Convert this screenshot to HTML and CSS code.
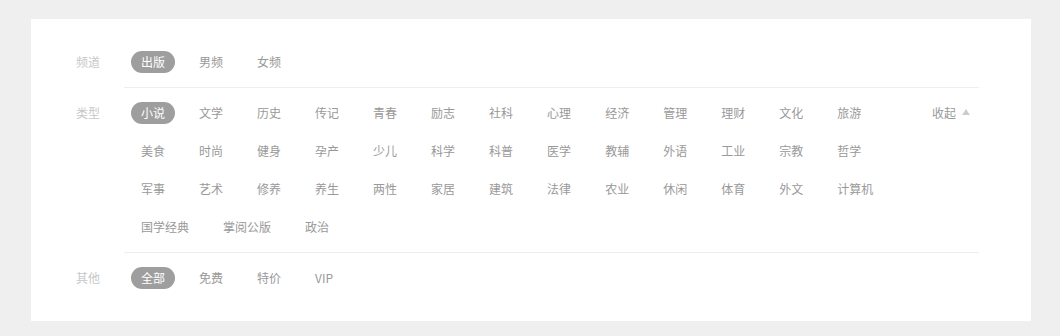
FILE: index.html
```html
<!DOCTYPE html>
<html lang="zh">
<head>
<meta charset="utf-8">
<title>筛选</title>
<link rel="stylesheet" href="styles.css">
</head>
<body>
<div class="card">
  <div class="section">
    <div class="label">频道</div>
    <div class="content">
      <div class="tags">
        <span class="tag active">出版</span>
        <span class="tag">男频</span>
        <span class="tag">女频</span>
      </div>
    </div>
  </div>
  <div class="section">
    <div class="label">类型</div>
    <div class="content">
      <div class="tags wrap">
        <span class="tag active">小说</span>
        <span class="tag">文学</span>
        <span class="tag">历史</span>
        <span class="tag">传记</span>
        <span class="tag">青春</span>
        <span class="tag">励志</span>
        <span class="tag">社科</span>
        <span class="tag">心理</span>
        <span class="tag">经济</span>
        <span class="tag">管理</span>
        <span class="tag">理财</span>
        <span class="tag">文化</span>
        <span class="tag">旅游</span>
        <span class="tag">美食</span>
        <span class="tag">时尚</span>
        <span class="tag">健身</span>
        <span class="tag">孕产</span>
        <span class="tag">少儿</span>
        <span class="tag">科学</span>
        <span class="tag">科普</span>
        <span class="tag">医学</span>
        <span class="tag">教辅</span>
        <span class="tag">外语</span>
        <span class="tag">工业</span>
        <span class="tag">宗教</span>
        <span class="tag">哲学</span>
        <span class="tag">军事</span>
        <span class="tag">艺术</span>
        <span class="tag">修养</span>
        <span class="tag">养生</span>
        <span class="tag">两性</span>
        <span class="tag">家居</span>
        <span class="tag">建筑</span>
        <span class="tag">法律</span>
        <span class="tag">农业</span>
        <span class="tag">休闲</span>
        <span class="tag">体育</span>
        <span class="tag">外文</span>
        <span class="tag">计算机</span>
        <span class="tag">国学经典</span>
        <span class="tag">掌阅公版</span>
        <span class="tag">政治</span>
      </div>
      <div class="toggle">收起<span class="arrow"></span></div>
    </div>
  </div>
  <div class="section last">
    <div class="label">其他</div>
    <div class="content">
      <div class="tags">
        <span class="tag active">全部</span>
        <span class="tag">免费</span>
        <span class="tag">特价</span>
        <span class="tag">VIP</span>
      </div>
    </div>
  </div>
</div>
</body>
</html>
```
FILE: styles.css
```css
html, body {
  margin: 0;
  padding: 0;
}
body {
  background: #efefef;
  font-family: "Microsoft YaHei", "Noto Sans CJK SC", "Noto Sans", sans-serif;
  font-size: 12px;
  padding: 19px 29px 0 31px;
}
.card {
  width: 1000px;
  box-sizing: border-box;
  background: #fff;
  padding: 18px 52px 18px 45px;
}
.section {
  display: flex;
  padding: 6px 0;
  border-bottom: 1px solid #eeeeee;
  margin-left: 48px;
}
.section.last {
  border-bottom: none;
}
.label {
  width: 48px;
  margin-left: -48px;
  line-height: 38px;
  color: #c8c8c8;
  flex: none;
}
.content {
  flex: 1;
  display: flex;
  align-items: flex-start;
  padding-left: 7px;
}
.tags {
  display: flex;
  flex-wrap: wrap;
  width: 790px;
}
.tag {
  height: 38px;
  display: flex;
  align-items: center;
  margin-right: 14px;
  color: #999;
  position: relative;
  padding: 0 10px;
  line-height: 22px;
  white-space: nowrap;
}
.tag.active {
  color: #fff;
}
.tag.active::before {
  content: "";
  position: absolute;
  left: 0;
  right: 0;
  top: 8px;
  height: 22px;
  border-radius: 11px;
  background: #9e9e9e;
  z-index: 0;
}
.tag.active {
  isolation: isolate;
}
.tag.active::before {
  z-index: -1;
}
.toggle {
  margin-left: auto;
  line-height: 38px;
  color: #999;
  display: flex;
  align-items: center;
  height: 38px;
  margin-right: 9px;
}
.arrow {
  width: 0;
  height: 0;
  border-left: 4px solid transparent;
  border-right: 4px solid transparent;
  border-bottom: 6px solid #cccccc;
  margin-left: 6px;
  margin-top: -2px;
}
```
